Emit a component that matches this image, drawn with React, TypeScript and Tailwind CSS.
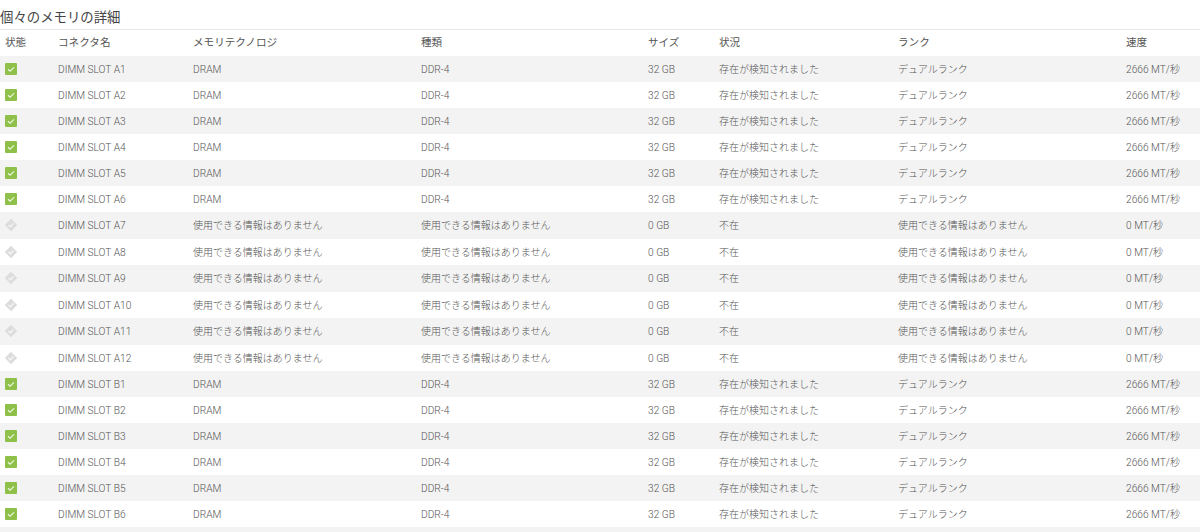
import React from "react";

const CJK = "font-['Roboto','Noto_Sans_CJK_JP',sans-serif]";
const COLS = "grid grid-cols-[53px_135px_228px_227px_71px_179px_228px_79px]";

interface Row {
  name: string;
  ok: boolean;
}

const slots = (bank: string, count: number, ok: (i: number) => boolean): Row[] =>
  Array.from({ length: count }, (_, i) => ({
    name: `DIMM SLOT ${bank}${i + 1}`,
    ok: ok(i),
  }));

const rows: Row[] = [...slots("A", 12, (i) => i < 6), ...slots("B", 6, () => true)];

function OkIcon() {
  return (
    <svg width="12" height="12" viewBox="0 0 12 12" className="block">
      <rect width="12" height="12" rx="1" fill="#8fc04a" />
      <path d="M3 6.2 5.1 8.1 9 4.4" fill="none" stroke="#eef6e0" strokeWidth="1.2" />
    </svg>
  );
}

function AbsentIcon() {
  return (
    <svg width="14" height="14" viewBox="0 0 14 14" className="block -ml-px">
      <path d="M7 .8 13.2 7 7 13.2 .8 7Z" fill="#dcdcdc" />
      <path d="M4.6 7 6.4 8.8 9.4 5.4" fill="none" stroke="#f8f8f8" strokeWidth="1.2" />
    </svg>
  );
}

function Cell({ children, latin }: { children?: React.ReactNode; latin?: boolean }) {
  return (
    <div className={`pl-[5px] pt-[1px] whitespace-nowrap ${latin ? "text-[10.2px]" : "text-[10px]"}`}>
      {children}
    </div>
  );
}

function Head({ children }: { children: React.ReactNode }) {
  return <div className="pl-[5px] whitespace-nowrap">{children}</div>;
}

export default function App() {
  const na = "使用できる情報はありません";
  return (
    <div className={`w-[1200px] h-[532px] overflow-hidden bg-white ${CJK}`}>
      <h2 className="h-[30px] pt-[9px] text-[13.4px] leading-[18px] font-normal text-[#444] border-b border-[#e6e6e6]">
        個々のメモリの詳細
      </h2>
      <div className={`${COLS} h-[26px] items-center text-[10.6px] text-[#555]`}>
        <Head>状態</Head>
        <Head>コネクタ名</Head>
        <Head>メモリテクノロジ</Head>
        <Head>種類</Head>
        <Head>サイズ</Head>
        <Head>状況</Head>
        <Head>ランク</Head>
        <Head>速度</Head>
      </div>
      {rows.map((row, i) => (
        <div
          key={row.name}
          className={`${COLS} ${row.ok ? "h-[26px]" : "h-[26.5px]"} items-center font-light text-[#555] ${
            i % 2 === 0 ? "bg-[#f3f3f3]" : "bg-white"
          }`}
        >
          <div className="pl-[5px]">{row.ok ? <OkIcon /> : <AbsentIcon />}</div>
          <Cell latin>{row.name}</Cell>
          {row.ok ? <Cell latin>DRAM</Cell> : <Cell>{na}</Cell>}
          {row.ok ? <Cell latin>DDR-4</Cell> : <Cell>{na}</Cell>}
          <Cell latin>{row.ok ? "32 GB" : "0 GB"}</Cell>
          <Cell>{row.ok ? "存在が検知されました" : "不在"}</Cell>
          <Cell>{row.ok ? "デュアルランク" : na}</Cell>
          <Cell latin>{row.ok ? "2666 MT/秒" : "0 MT/秒"}</Cell>
        </div>
      ))}
      <div className="h-[26px] bg-[#f3f3f3]" />
    </div>
  );
}
